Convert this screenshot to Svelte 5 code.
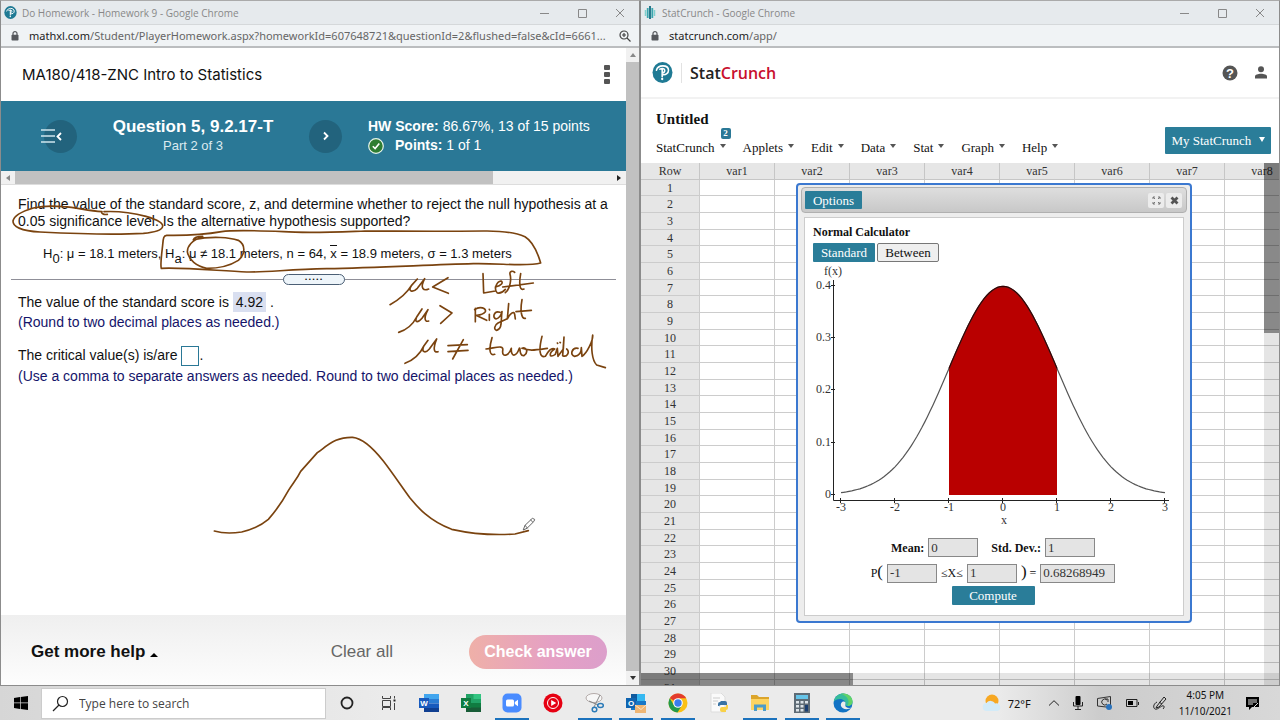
<script lang="ts">
  const rows = Array.from({ length: 31 }, (_, i) => i + 1);
  const cols = Array.from({ length: 8 }, (_, i) => `var${i + 1}`);
  const menus = ['StatCrunch', 'Applets', 'Edit', 'Data', 'Stat', 'Graph', 'Help'];

  let course = 'MA180/418-ZNC Intro to Statistics';
  let critical = $state('');
  let mean = $state('0');
  let sd = $state('1');
  let lower = $state('-1');
  let upper = $state('1');
  let prob = $state('0.68268949');

  // plot space: one x unit is 54px, 0.4 of density is 209px
  const px = (x: number) => 198 + x * 54;
  const py = (y: number) => 231 - y * 523;
  const pdf = (x: number) => Math.exp((-x * x) / 2) / Math.sqrt(2 * Math.PI);

  function curve(from: number, to: number) {
    const pts: string[] = [];
    for (let x = from; x <= to + 0.001; x += 0.05) pts.push(`${px(x).toFixed(1)},${py(pdf(x)).toFixed(1)}`);
    return pts.join(' ');
  }

  const full = curve(-3, 3);
  const shaded = `${px(-1)},${py(0)} ${curve(-1, 1)} ${px(1)},${py(0)}`;
  const xTicks = [-3, -2, -1, 0, 1, 2, 3];
  const yTicks = [0, 0.1, 0.2, 0.3, 0.4];

  const apps = ['cortana', 'taskview', 'word', 'excel', 'zoom', 'music', 'snip', 'outlook', 'chrome', 'python', 'files', 'calc', 'edge'];
  const running = ['zoom', 'snip', 'outlook', 'chrome', 'files', 'calc', 'edge'];
</script>

{#snippet pearson(size: number)}
  <svg width={size} height={size} viewBox="0 0 20 20" aria-hidden="true">
    <ellipse cx="10" cy="10" rx="9.5" ry="10" fill="#1f7a94" />
    <path d="M4.200 7.800C5 5 7.500 3.700 10.300 3.700c3.200 0 5.400 1.700 5.400 4.200 0 2.700-2.400 4.500-5.400 4.200" fill="none" stroke="#fff" stroke-width="1.500" stroke-linecap="round" />
    <path d="M7.500 6.800c2.500-1 4.600-.4 4.600 1.200 0 1.400-1 2.300-2.400 2.600M9.700 6.500v7.500" fill="none" stroke="#fff" stroke-width="1.500" stroke-linecap="round" />
    <circle cx="9.700" cy="16.200" r="1.100" fill="#fff" />
  </svg>
{/snippet}

{#snippet winbuttons()}
  <div class="winbtns">
    <button aria-label="Minimize"><svg width="10" height="10"><path d="M1 5.500h9" /></svg></button>
    <button aria-label="Maximize"><svg width="10" height="10"><path d="M1.500 1.500h8v8h-8z" /></svg></button>
    <button aria-label="Close"><svg width="10" height="10"><path d="M1 1l8 8M9 1l-8 8" /></svg></button>
  </div>
{/snippet}

{#snippet lock()}
  <svg class="lock" width="8" height="10" viewBox="0 0 8 10" aria-hidden="true">
    <path d="M2 4V2.600a2 2 0 0 1 4 0V4" fill="none" stroke="#55585c" stroke-width="1.200" />
    <rect x="0.500" y="3.800" width="7" height="5.700" rx="0.800" fill="#55585c" />
  </svg>
{/snippet}

<div class="desktop">
  <main>
    <section class="window" aria-label="Do Homework">
      <div class="titlebar">
        {@render pearson(13)}
        <span class="title">Do Homework - Homework 9 - Google Chrome</span>
        {@render winbuttons()}
      </div>
      <div class="address">
        {@render lock()}
        <span class="url"><b>mathxl.com</b>/Student/PlayerHomework.aspx?homeworkId=607648721&amp;questionId=2&amp;flushed=false&amp;cId=6661...</span>
        <svg class="magnify" width="12" height="12" viewBox="0 0 12 12" aria-hidden="true">
          <path d="M8 8l3.500 3.500M3 5h4M5 3v4" /><circle cx="5" cy="5" r="4" />
        </svg>
      </div>

      <div class="frame">
        <div class="player">
          <header class="course">
            <h1>{course}</h1>
            <button class="kebab" aria-label="More options"><i></i><i></i><i></i></button>
          </header>

          <div class="banner">
            <button class="round list" aria-label="Question list">
              <svg width="24" height="16" viewBox="0 0 24 16"><path d="M1 2h14M1 8h14M1 14h14" stroke="#cfe6ee" stroke-width="1.500" fill="none" /><path d="M21 5l-3.500 3.500L21 12" stroke="#fff" stroke-width="1.800" fill="none" /></svg>
            </button>
            <div class="question">
              <strong>Question 5, 9.2.17-T</strong>
              <span>Part 2 of 3</span>
            </div>
            <button class="round" aria-label="Next question">
              <svg width="8" height="10" viewBox="0 0 8 10"><path d="M2 1.500L5.500 5 2 8.500" stroke="#fff" stroke-width="1.800" fill="none" /></svg>
            </button>
            <div class="score">
              <div><b>HW Score:</b> 86.67%, 13 of 15 points</div>
              <div class="points">
                <svg width="16" height="16" viewBox="0 0 16 16" aria-hidden="true"><circle cx="8" cy="8" r="7.300" fill="#2e7d32" stroke="#e8f4ea" stroke-width="1.200" /><path d="M4.800 8.300l2.300 2.300 4.200-5" fill="none" stroke="#fff" stroke-width="1.600" /></svg>
                <span><b>Points:</b> 1 of 1</span>
              </div>
            </div>
          </div>

          <div class="hscroll">
            <button aria-label="Scroll left"><svg width="4" height="6"><path d="M4 0v6L0 3z" fill="#888" /></svg></button>
            <div class="track"><div class="thumb"></div></div>
            <button aria-label="Scroll right"><svg width="4" height="6"><path d="M0 0v6l4-3z" fill="#222" /></svg></button>
          </div>

          <article class="work">
            <p class="prompt">Find the value of the standard score, z, and determine whether to reject the null hypothesis at a<br />0.05 significance level. Is the alternative hypothesis supported?</p>
            <p class="given">H<sub>0</sub>: μ = 18.1 meters, H<sub>a</sub>: μ ≠ 18.1 meters, n = 64, <span class="bar">x</span> = 18.9 meters, σ = 1.3 meters</p>
            <div class="divider"><span>• • • • •</span></div>
            <p class="line">The value of the standard score is <span class="answer">4.92</span> .</p>
            <p class="line hint">(Round to two decimal places as needed.)</p>
            <p class="line gap"><label for="critical">The critical value(s) is/are</label> <input id="critical" bind:value={critical} />.</p>
            <p class="line hint">(Use a comma to separate answers as needed. Round to two decimal places as needed.)</p>

            <!-- pen annotations -->
            <svg class="ink" viewBox="3 0 1875 1293" aria-hidden="true">
              <g>
                <path d="M322 88C310 90 302 84 306 80C260 76 230 68 190 65C160 62 130 62 100 69C70 78 42 92 39 108C38 124 62 138 120 141C220 146 350 150 430 145C465 142 486 134 488 124C490 112 462 101 438 94C400 84 355 78 312 80" />
                <path d="M484 250C480 240 486 200 488 180C490 160 490 152 500 151C560 152 620 148 665 140C700 134 780 137 850 140C930 145 1010 141 1095 138C1190 138 1280 140 1450 138C1510 137 1545 142 1575 155C1600 170 1612 200 1622 234C1580 246 1500 234 1420 236C1280 240 1130 248 980 251C860 254 800 262 740 261C660 258 560 247 484 250" />
                <path d="M608 154C590 154 582 158 580 164C640 152 690 158 715 166C738 180 736 208 715 226C690 242 660 250 620 250C590 244 566 225 562 200C562 184 575 165 608 156" />
              </g>
              <g transform="translate(960 0)">
                <path d="M210 359C245 340 262 322 274 302L292 282M274 302C262 320 278 324 292 310L314 281C298 312 312 318 326 312" />
                <path d="M384 278L338 306L385 325" />
                <path d="M489 266L491 324L526 318M526 306C545 302 551 292 543 288C530 290 520 312 532 324C542 326 550 320 556 313M556 323C572 310 574 280 570 268C568 256 580 258 584 262M548 306L640 294M602 266C596 300 600 318 612 312" />
                <path d="M236 442C262 434 280 416 290 396L306 372M290 396C282 416 296 412 306 400L324 374C312 396 312 412 326 408" />
                <path d="M360 362L396 384L362 415" />
                <path d="M466 370L466 410M464 374C480 362 500 370 496 380C488 390 476 390 468 391L500 406M508 388L508 406M508 373L509 375M540 382C522 376 516 398 528 402C538 400 544 388 546 380C542 408 548 432 530 436C520 434 524 420 534 414L560 402M566 356L562 402C570 386 582 376 584 388L586 402M606 344C600 378 604 402 616 400M588 380L634 376" />
                <path d="M255 535C284 524 302 504 312 482L324 466M312 482C302 502 316 506 328 492L350 462C338 492 342 504 354 500" />
                <path d="M384 482L442 479M384 500L444 496M430 464L398 522" />
                <path d="M516 458C506 492 508 514 524 508M498 492C530 488 552 478 548 498C546 518 566 514 574 490C572 516 588 518 598 490C602 484 596 514 612 512C626 502 620 484 606 490C630 498 640 496 682 490M666 454C656 494 658 520 676 514C684 500 694 486 704 492C686 504 686 522 706 508L712 490L714 514L730 492L732 456L728 512C742 518 750 500 740 492M774 490C756 486 748 510 764 514C782 512 784 496 784 488L786 514C800 506 820 466 818 450C812 490 816 526 830 540L856 548M712 474L713 475M720 472L721 473" />
              </g>
              <g transform="translate(600 705)">
                <path d="M43 333C70 341 105 339 125 336C155 329 185 315 205 298C235 264 250 240 265 212C280 188 290 178 302 154L352 98C355 94 362 93 366 88C395 65 418 51 458 52C490 55 520 85 550 123C580 162 605 200 630 234C650 258 685 302 755 328C800 338 870 347 945 342L985 332" />
                <path class="pencil" d="M970 329L975 316L997 295L1004 298L1002 304L982 324ZM975 316L982 324M992 300L998 306" />
              </g>
            </svg>
          </article>

          <footer class="actions">
            <button class="help">Get more help <svg width="8" height="4"><path d="M0 4h8L4 0z" /></svg></button>
            <button class="clear">Clear all</button>
            <button class="check">Check answer</button>
          </footer>
        </div>

        <div class="vscroll">
          <button aria-label="Scroll up"><svg width="6" height="4"><path d="M0 4h6L3 0z" fill="#888" /></svg></button>
          <div class="track"></div>
          <button aria-label="Scroll down"><svg width="6" height="4"><path d="M0 0h6L3 4z" fill="#333" /></svg></button>
        </div>
      </div>
    </section>

    <section class="window" aria-label="StatCrunch">
      <div class="titlebar">
        <svg width="13" height="13" viewBox="0 0 13 13" aria-hidden="true">
          <path d="M1.500 4v6M10.500 4v6" stroke="#7fd0cd" stroke-width="1.500" /><path d="M3.700 2v10M8.300 2v10" stroke="#3aa6ae" stroke-width="1.800" /><path d="M6 0v13" stroke="#136b80" stroke-width="1.800" />
        </svg>
        <span class="title">StatCrunch - Google Chrome</span>
        {@render winbuttons()}
      </div>
      <div class="address">
        {@render lock()}
        <span class="url"><b>statcrunch.com</b>/app/</span>
      </div>

      <header class="brand">
        {@render pearson(21)}
        <span class="logo">Stat<em>Crunch</em></span>
        <button aria-label="Help">
          <svg width="16" height="16" viewBox="0 0 16 16"><circle cx="8" cy="8" r="7.500" fill="#555" /><text x="8" y="12.500" text-anchor="middle" font-size="13" font-weight="700" fill="#fff">?</text></svg>
        </button>
        <button aria-label="Account">
          <svg width="12" height="13" viewBox="0 0 12 13"><circle cx="6" cy="3.200" r="3" fill="#555" /><path d="M0 12.500V10.500C0 8.800 3 7.800 6 7.800s6 1 6 2.700v2z" fill="#555" /></svg>
        </button>
      </header>

      <div class="toolbar">
        <div>
          <h2>Untitled</h2>
          <nav>
            {#each menus as m (m)}
              <button>{m}<svg width="6" height="4"><path d="M0 0h6L3 4z" fill="#555" /></svg>{#if m === 'StatCrunch'}<span class="badge">2</span>{/if}</button>
            {/each}
          </nav>
        </div>
        <button class="teal mine">My StatCrunch <svg width="6" height="5"><path d="M0 0h6L3 5z" fill="#fff" /></svg></button>
      </div>

      <div class="sheet">
        <table>
          <thead>
            <tr><th>Row</th>{#each cols as c (c)}<th>{c}</th>{/each}</tr>
          </thead>
          <tbody>
            {#each rows as r (r)}
              <tr><th>{r}</th>{#each cols as c (c)}<td></td>{/each}</tr>
            {/each}
          </tbody>
        </table>
        <div class="sheet-v"><i></i></div>
        <div class="sheet-h"><i></i></div>

        <div class="dialog" role="dialog" aria-label="Normal Calculator">
          <div class="dlg-bar">
            <button class="teal">Options</button>
            <button class="tool" aria-label="Resize"><svg width="9" height="9" viewBox="0 0 9 9"><path d="M1 3V1h2M6 1h2v2M8 6v2H6M3 8H1V6M1 1l2 2M8 1L6 3M8 8L6 6M1 8l2-2" stroke="#777" fill="none" /></svg></button>
            <button class="tool" aria-label="Close"><svg width="9" height="9" viewBox="0 0 9 9"><path d="M1.500 1.500l6 6M7.500 1.500l-6 6" stroke="#555" stroke-width="2.800" fill="none" /></svg></button>
          </div>
          <div class="dlg-body">
            <h3>Normal Calculator</h3>
            <div class="tabs">
              <button class="teal">Standard</button>
              <button class="plain">Between</button>
            </div>
            <svg class="plot" width="378" height="268" role="img" aria-label="Normal density">
              <polygon points={shaded} fill="#b90000" />
              <polyline points={full} fill="none" stroke="#555" stroke-width="1.200" />
              <polyline points={curve(-1, 1)} fill="none" stroke="#3a0000" stroke-width="1.200" />
              <path d="M28.500 16V236.500H364" fill="none" stroke="#222" />
              <text x="28" y="11" text-anchor="middle">f(x)</text>
              {#each yTicks as t (t)}
                <path d="M26 {Math.round(py(t)) - 0.5}h4" stroke="#222" />
                <text x="26" y={Math.round(py(t)) + 3} text-anchor="end">{t}</text>
              {/each}
              {#each xTicks as t (t)}
                <path d="M{px(t) - 0.5} 234v5" stroke="#222" />
                <text x={px(t)} y="247" text-anchor="middle">{t}</text>
              {/each}
              <text x="199" y="260" text-anchor="middle">x</text>
            </svg>
            <form onsubmit={(e) => e.preventDefault()}>
              <div class="fields first">
                <label for="mean">Mean:</label><input id="mean" bind:value={mean} />
                <label for="sd" class="sd">Std. Dev.:</label><input id="sd" bind:value={sd} />
              </div>
              <div class="fields">
                <span>P<big>(</big></span><input aria-label="Lower bound" bind:value={lower} />
                <span>≤X≤</span><input aria-label="Upper bound" bind:value={upper} />
                <span><big>)</big> =</span><input class="wide" aria-label="Probability" bind:value={prob} />
              </div>
              <button class="teal compute">Compute</button>
            </form>
          </div>
        </div>
      </div>
    </section>
  </main>

  <div class="taskbar">
    <button class="start" aria-label="Start">
      <svg width="14" height="14" viewBox="0 0 14 14"><path d="M0 2l6-1v5.500H0zM6.700.9L14 0v6.500H6.700zM0 7.300h6v5.600L0 12zM6.700 7.300H14V14l-7.300-1z" /></svg>
    </button>
    <label class="search">
      <svg width="17" height="17" viewBox="0 0 17 17"><circle cx="10.500" cy="6.500" r="5" fill="none" stroke="#222" stroke-width="1.200" /><path d="M7 10l-6 6" stroke="#222" stroke-width="1.200" /></svg>
      <input type="text" placeholder="Type here to search" />
    </label>
    <div class="apps">
      {#each apps as a (a)}
        <button class:running={running.includes(a)} aria-label={a}>
          <svg width="20" height="20" viewBox="0 0 20 20">
            {#if a === 'cortana'}
              <circle cx="10" cy="10" r="5.500" fill="none" stroke="#222" stroke-width="1.800" />
            {:else if a === 'taskview'}
              <path d="M4.500 3v2.500h8V3M4.500 7.500h8v6h-8zM4.500 17v-2.500h8V17M16.500 3v2.500M16.500 10v7" fill="none" stroke="#444" /><path d="M15.500 6.500h2v2h-2z" fill="#222" />
            {:else if a === 'word'}
              <path d="M5 1h15v5H5z" fill="#41a5ee" /><path d="M5 6h15v4.500H5z" fill="#2b7cd3" /><path d="M5 10.500h15V15H5z" fill="#185abd" /><path d="M5 15h15v4H5z" fill="#103f91" />
              <rect y="5" width="10" height="10" fill="#185abd" /><text x="5" y="13" class="mark">W</text>
            {:else if a === 'excel'}
              <path d="M5 1h15v18H5z" fill="#21a366" /><path d="M12.500 1H20v5h-7.500z" fill="#33c481" /><path d="M5 10h15v9H5z" fill="#107c41" /><path d="M5 14.500h15V19H5z" fill="#185c37" />
              <rect y="5" width="10" height="10" fill="#107c41" /><text x="5" y="13" class="mark">X</text>
            {:else if a === 'zoom'}
              <rect x="0.500" y="0.500" width="19" height="19" rx="5" fill="#4a8cff" /><rect x="4" y="6.500" width="8" height="7" rx="1.500" fill="#fff" /><path d="M12.800 9l3.200-2.300v6.600L12.800 11z" fill="#fff" />
            {:else if a === 'music'}
              <circle cx="10" cy="10" r="9.500" fill="#e60012" /><circle cx="10" cy="10" r="5.500" fill="none" stroke="#fff" /><path d="M8.200 7l5 3-5 3z" fill="#fff" />
            {:else if a === 'snip'}
              <ellipse cx="9" cy="5" rx="8" ry="4.500" fill="#f7f7f7" stroke="#b3aaa8" /><path d="M4 8l9 4M15 2L9 14" stroke="#888" /><circle cx="9.500" cy="16.500" r="2.300" fill="none" stroke="#2a7ab8" stroke-width="1.500" /><ellipse cx="15.500" cy="12.500" rx="2.800" ry="2" fill="none" stroke="#2a7ab8" stroke-width="1.500" />
            {:else if a === 'outlook'}
              <path d="M5 1h13v7H5z" fill="#0f5a9e" /><path d="M11 1h8v7h-8z" fill="#35b8f1" /><path d="M5 8h15v9H5z" fill="#1778c8" /><rect y="5" width="10" height="10" fill="#0f64b0" /><text x="5" y="13" class="mark">O</text><path d="M9 12h12v8H9z" fill="#efb674" /><path d="M9 12l6 4.500 5-4.500" fill="none" stroke="#fbe3c4" />
            {:else if a === 'chrome'}
              <circle cx="10" cy="10" r="9.500" fill="#fbc116" /><path d="M10 10L1.800 5.200A9.500 9.500 0 0 1 18.200 5.200H10z" fill="#e33b2e" /><path d="M1.800 5.200A9.500 9.500 0 0 0 9.500 19.500L14 12.300 10 10 5.900 12.300z" fill="#229a4c" /><circle cx="10" cy="10" r="4.800" fill="#fff" /><circle cx="10" cy="10" r="3.700" fill="#3b7ded" />
            {:else if a === 'python'}
              <path d="M2 0h10l4 4v15H2z" fill="#fafafa" stroke="#ddd" /><path d="M4 5h7M4 8h5M4 11h3" stroke="#ccc" /><path d="M12 8h4a2 2 0 0 1 2 2v2h-6a2 2 0 0 0-2 2v-1H9v-2a2 2 0 0 1 2-2z" fill="#3872a3" /><path d="M19 12v3a2 2 0 0 1-2 2v2h-4a2 2 0 0 1-2-2v-1a2 2 0 0 1 2-2h4v-2z" fill="#f8d148" />
            {:else if a === 'files'}
              <path d="M1 2h6l2 2h10v4H1z" fill="#dca52b" /><path d="M1 6h18v11H1z" fill="#fdd462" /><path d="M4 18v-6.500h12V18h-3v-3.500H7V18z" fill="#4d9cc9" />
            {:else if a === 'calc'}
              <path d="M2 0h16v20H2z" fill="#5e6b75" /><path d="M4 2h12v4H4z" fill="#66c4e8" />
              {#each [8, 12, 16] as y (y)}<path d="M4 {y}h3v2.500H4zM8.500 {y}h3v2.500h-3z" fill="#dce3e8" />{/each}
              <path d="M13 8h3v2.500h-3z" fill="#dce3e8" /><path d="M13 12h3v6.500h-3z" fill="#1a3f72" />
            {:else}
              <circle cx="10" cy="10" r="9.500" fill="#1273c4" /><path d="M.7 8.500C2 3 6 .5 10 .5c6 0 9.500 4 9.500 8 0 3-2.300 4.500-5 4.500-2 0-2.500-1-2-2C13 7 7 3.500.7 8.500z" fill="#37bd9a" /><path d="M10 .5c6 0 9.500 4 9.500 8 0 3-2.300 4.500-5 4.500C17 8 15 3 8 .7z" fill="#62d368" /><path d="M12.500 9.500C11 7 7 9 8 13c1 3 6 4.500 10 1.800-1 .2-6 .5-5.700-2.800z" fill="#ebebeb" />
            {/if}
          </svg>
        </button>
      {/each}
    </div>
    <div class="tray">
      <svg width="20" height="18" viewBox="0 0 20 18" aria-hidden="true"><circle cx="10" cy="7" r="6.500" fill="#f7a823" /><path d="M5 17a4 4 0 0 1-.5-8A5 5 0 0 1 13 9.500 3.800 3.800 0 0 1 15.500 17z" fill="#d3ebf8" /></svg>
      <span class="temp">72°F</span>
      <svg width="10" height="6"><path d="M0 5.500L5 .7l5 4.800" fill="none" stroke="#222" /></svg>
      <svg width="10" height="14"><rect x="2.500" width="5" height="9" rx="1" /><path d="M.5 6v4h9V6M5 10v3M2 13.500h6" fill="none" stroke="#222" /></svg>
      <svg width="15" height="14"><path d="M.5 2.500l13-2v11l-13-1.500zM10 4a3 3 0 1 0 0 4M8 3h3v3" fill="none" stroke="#333" /><circle cx="12" cy="11" r="3" fill="#2c74bd" /></svg>
      <svg width="13" height="8"><path d="M.5.500h10.500v7H.500zM12.500 3v3" fill="none" stroke="#222" /><path d="M2 2h5v4H2z" /></svg>
      <svg class="pen" width="14" height="14" fill="none" stroke="#222"><path d="M4 10L11 1l2 2-7 8-3 1zM4 6C0 8 0 12 2 13s5-2 7-3 3 1 1 3M6 6l3 2" /></svg>
      <div class="clock"><span>4:05 PM</span><span>11/10/2021</span></div>
      <svg width="14" height="13" viewBox="0 0 14 13"><path d="M0 0h13v10H6l-3 3v-3H0z" /><path d="M2 3h9M2 5h9M2 7h5" stroke="#ddd" /><path d="M8 10l4-4" stroke="#ddd" /></svg>
    </div>
  </div>
</div>

<style>
  :global(body) { margin: 0; overflow: hidden; }
  * { box-sizing: border-box; }
  button { font: inherit; color: inherit; background: none; border: 0; padding: 0; }
  h1, h2, h3, p { margin: 0; }
  svg { flex: none; }

  .desktop { display: flex; flex-direction: column; height: 100vh; background: #e6e6e6;
             font-family: "Liberation Sans", Arial, sans-serif; color: #111; }
  main { flex: 1; min-height: 0; display: grid; grid-template-columns: 1fr 1fr; }

  .window { display: flex; flex-direction: column; min-width: 0; min-height: 0; background: #fff;
            border: 1px solid #8c8c8c; border-top-color: #aaa; overflow: hidden; }
  .titlebar { flex: none; display: flex; align-items: center; gap: 5px; height: 24px; padding: 0 3px;
              background: #e6eaed; border-bottom: 1px solid #d5d8da;
              font: 10px "Open Sans", "Noto Sans", sans-serif; color: #888; }
  .title { flex: 1; }
  .winbtns { display: flex; gap: 28px; padding-right: 11px; }
  .winbtns button { display: flex; }
  .winbtns path { fill: none; stroke: #888; }
  .address { flex: none; display: flex; align-items: center; height: 23px; padding: 0 8px 0 10px;
             background: #f0f3f5; border-bottom: 2px solid #bbbdbf;
             font: 11px "Noto Sans", sans-serif; color: #666; }
  .url { flex: 1; padding-left: 10px; white-space: nowrap; }
  .url b { font-weight: 400; color: #222; }
  .magnify { fill: none; stroke: #444; stroke-width: 1.2px; }

  .frame { flex: 1; display: flex; min-height: 0; }
  .player { flex: 1; display: flex; flex-direction: column; min-width: 0; }
  .course { flex: none; display: flex; align-items: center; justify-content: space-between;
            height: 53px; padding: 0 16px 0 21px; }
  .course h1 { font: 400 15px "Inter", sans-serif; color: #111; }
  .kebab { display: flex; flex-direction: column; gap: 2px; }
  .kebab i { width: 6px; height: 5px; border-radius: 1px; background: #555; }

  .banner { flex: none; display: flex; align-items: center; height: 70px; padding-left: 43px;
            background: #2a7896; color: #fff; white-space: nowrap; }
  .round { flex: none; display: flex; align-items: center; justify-content: center; width: 33px; height: 33px;
           border-radius: 50%; background: #22637d; }
  .list { position: relative; }
  .list svg { position: absolute; left: -4px; top: 8px; }
  .question { display: flex; flex-direction: column; align-items: center; width: 232px; }
  .question strong { font-size: 17px; line-height: 20px; }
  .question span { font-size: 13px; line-height: 18px; color: #dbeaf0; }
  .score { padding-left: 26px; font-size: 14px; line-height: 19px; }
  .points { display: flex; align-items: center; gap: 11px; }

  .hscroll { flex: none; display: flex; height: 14px; background: #f1f1f1; border-bottom: 1px solid #ddd; }
  .hscroll button { width: 14px; display: flex; align-items: center; justify-content: center; }
  .track { flex: 1; }
  .thumb { width: 80%; height: 100%; background: #c1c1c1; }
  .vscroll { display: flex; flex-direction: column; width: 13px; background: #f1f1f1; }
  .vscroll button { height: 14px; display: flex; align-items: center; justify-content: center; }
  .vscroll .track { background: #c1c1c1; }

  .work { position: relative; flex: 1; min-height: 0; padding: 11px 10px 0 17px; font-size: 14px; white-space: nowrap; }
  .prompt { line-height: 17px; }
  .given { margin-top: 15px; padding-left: 25px; font-size: 13px; line-height: 18px; }
  .given sub { font-size: 13px; line-height: 0; vertical-align: -5px; }
  .bar { display: inline-block; border-top: 1px solid #111; line-height: 16px; }
  .divider { display: flex; justify-content: center; align-items: center; height: 10px; margin: 11px 0 0 -7px;
             background: linear-gradient(#8f8f98, #8f8f98) center / 100% 1px no-repeat; }
  .divider span { width: 62px; height: 11px; border: 1px solid #4b5f75; border-radius: 6px; background: #eef5fa;
                  font-size: 6px; line-height: 9px; text-align: center; }
  .line { line-height: 20px; }
  .divider + .line { margin-top: 8px; }
  .gap { margin-top: 13px; }
  .hint { color: #14146a; }
  .answer { display: inline-block; padding: 0 3px; background: #d9dff0; }
  .line input { width: 18px; height: 20px; border: 1px solid #2a7896; padding: 0; vertical-align: middle; }
  .ink { position: absolute; left: 0; top: 0; width: 625px; height: 431px; fill: none; stroke: #7a430f;
         stroke-width: 5px; stroke-linecap: round; stroke-linejoin: round; }
  .pencil { fill: #fff; stroke: #666; stroke-width: 3px; }

  .actions { flex: none; display: flex; align-items: center; gap: 76px; height: 70px;
             padding: 4px 19px 0 30px; background: linear-gradient(#efefef, #fdfdfd); }
  .help { margin-right: auto; font-size: 17px; font-weight: 700; }
  .clear { font-size: 17px; color: #666; }
  .check { width: 138px; height: 34px; border-radius: 17px; color: #fff; font-size: 16px; font-weight: 700;
           background: linear-gradient(90deg, #efb0a8, #e5a0c4 60%, #dc9fcb); }

  .brand { flex: none; display: flex; align-items: center; height: 51px; padding: 0 12px 0 11px; border-bottom: 2px solid #f2f2f2; }
  .logo { flex: 1; margin-left: 8px; padding-left: 8px; border-left: 1px solid #e2e2e2;
          font: 600 16px/20px "Open Sans", sans-serif; color: #222; }
  .logo em { font-style: normal; color: #c8102e; }
  .brand button { display: flex; margin-left: 17px; }
  .brand text { font-family: "Liberation Sans", sans-serif; }

  .toolbar { flex: none; display: flex; justify-content: space-between; height: 64px; padding: 0 8px 0 15px;
             font-family: "Liberation Serif", serif; }
  h2 { padding-top: 11px; font-size: 15px; line-height: 18px; }
  nav { display: flex; gap: 17px; margin-top: 11px; font-size: 13px; line-height: 18px; }
  nav button { position: relative; display: flex; gap: 5px; }
  nav svg { margin-top: 5px; }
  .badge { position: absolute; right: -5px; top: -11px; width: 10px; height: 11px; border-radius: 2px;
           background: #2a7896; color: #fff; font: 700 9px/11px "Liberation Serif", serif; text-align: center; }
  .teal { background: #2a7d99; color: #fff; border-radius: 1px; font-family: "Liberation Serif", serif; }
  .mine { width: 106px; height: 27px; margin-top: 28px; font-size: 13px; white-space: nowrap; }
  .mine svg { margin: 0 0 3px 4px; }

  .sheet { position: relative; flex: 1; min-height: 0; overflow: hidden; font-family: "Liberation Serif", serif; }
  table { border-collapse: separate; border-spacing: 0; table-layout: fixed; width: 659px; }
  th, td { height: 17px; padding: 0; border: solid #ccc; border-width: 0 1px 1px 0; }
  tbody tr:nth-child(3n + 1) > * { height: 16px; }
  th { width: 59px; background: #e6e6e6; font-size: 12px; font-weight: 400; line-height: 14px; color: #333; }
  thead tr > th { width: 75px; border-color: #c6c6c6; }
  thead tr > th:first-child { width: 59px; }
  .sheet-v, .sheet-h { position: absolute; right: 0; bottom: 0; background: rgba(0, 0, 0, 0.1); }
  .sheet-v { top: 0; width: 15px; }
  .sheet-h { left: 0; height: 12px; }
  .sheet-v i, .sheet-h i { display: block; background: rgba(0, 0, 0, 0.4); }
  .sheet-v i { height: 170px; }
  .sheet-h i { width: 212px; height: 12px; }

  .dialog { position: absolute; left: 155px; top: 20px; width: 396px; padding: 2px 3px 5px; background: #ededed;
            border: 2px solid #3b78d0; border-radius: 4px; }
  .dlg-bar { display: flex; align-items: center; gap: 2px; height: 26px; padding: 0 4px 0 3px; border: 1px solid #b0b0b0;
             border-radius: 4px; background: linear-gradient(#dedede, #c8c8c8); }
  .dlg-bar .teal { margin-right: auto; width: 57px; height: 18px; font-size: 13px; line-height: 17px; }
  .tool { display: flex; align-items: center; justify-content: center; width: 16px; height: 15px;
          border-radius: 2px; background: #ececec; }
  .dlg-body { margin: 4px 3px 0; padding: 7px 0 10px 8px; border: 1px solid #ccc; background: #fff; }
  h3 { font-size: 12px; line-height: 15px; }
  .tabs { display: flex; gap: 2px; margin-top: 3px; }
  .tabs button { width: 62px; height: 19px; font-size: 13px; line-height: 16px; }
  .plain { border: 1px solid #777; border-radius: 2px; background: #efefef; font-family: "Liberation Serif", serif; }
  .plot { display: block; margin: 2px 0 0 -8px; font-size: 12px; fill: #333; }
  form { display: flex; flex-direction: column; align-items: center; margin-left: -10px; padding-top: 6px; }
  .fields { display: flex; align-items: baseline; height: 24px; gap: 4px; font-size: 12px; white-space: nowrap; }
  .first { font-weight: 700; }
  .sd { margin-left: 9px; }
  .fields input { width: 50px; height: 19px; padding: 0 2px; border: 1px solid #888; background: #e4e4e4;
                  font: 13px "Liberation Serif", serif; color: #333; }
  .fields .wide { width: 75px; }
  .fields big { font-size: 17px; }
  .compute { width: 83px; height: 19px; font-size: 13px; line-height: 17px; }

  .taskbar { flex: none; display: flex; align-items: center; height: 34px; background: linear-gradient(90deg, #d6d6d6, #ebebeb 30%, #ebebeb 78%, #ccc 86%, #d8d8d8);
             font-family: "Noto Sans", "Open Sans", sans-serif; }
  .start { width: 41px; display: flex; justify-content: center; }
  .search { display: flex; align-items: center; gap: 10px; width: 285px; height: 31px; padding-left: 10px;
            border: 1px solid #ccc; background: #fff; }
  .search input { flex: 1; min-width: 0; border: 0; padding: 0; background: none; font: 12px "Open Sans", sans-serif; }
  .search input::placeholder { color: #444; }
  .apps { display: flex; width: 42%; height: 34px; }
  .apps button { flex: 1; display: flex; align-items: center; justify-content: center; }
  .running { background: linear-gradient(#1b72bd, #1b72bd) center bottom / 34px 2px no-repeat; }
  .mark { font: 700 8px "Liberation Sans", sans-serif; fill: #fff; text-anchor: middle; }
  .tray { flex: 1; display: flex; align-items: center; justify-content: flex-end; gap: 14px; padding-right: 20px; }
  .temp { margin-left: -8px; font-size: 11px; padding-right: 4px; }
  .pen { margin-right: -2px; }
  .clock { display: flex; flex-direction: column; align-items: center; font-size: 10px; line-height: 16px; }
</style>
